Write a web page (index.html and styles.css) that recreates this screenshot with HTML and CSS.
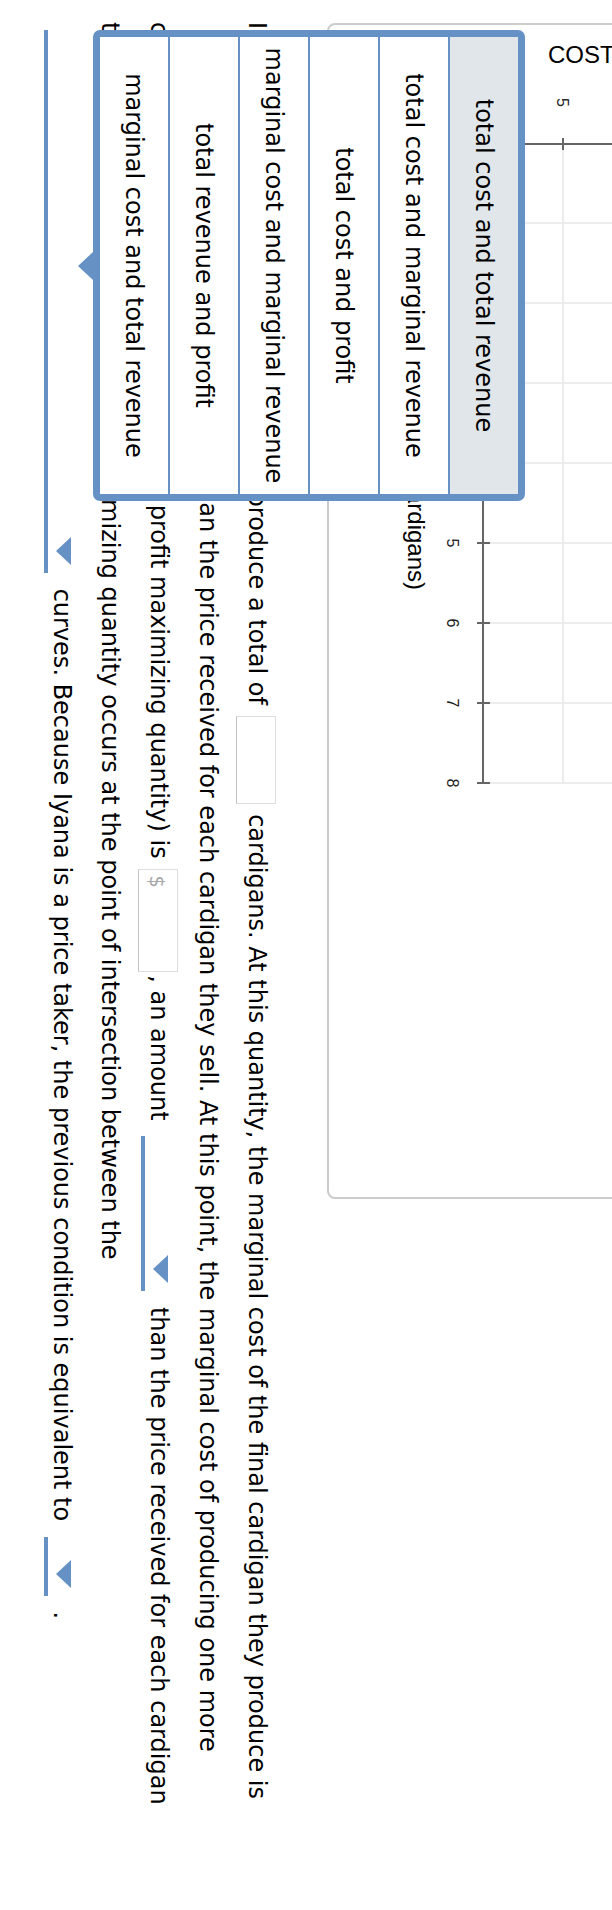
FILE: index.html
```html
<!DOCTYPE html>
<html lang="en">
<head>
<meta charset="utf-8">
<title>Profit maximization for a price taker</title>
<link rel="stylesheet" href="styles.css">
</head>
<body>
<div class="stage">
  <div class="graph-card">
    <svg class="chart" viewBox="25 -273 1172 556" width="1172" height="556" aria-label="Cost graph">
      <g class="grid">
        <line x1="223" y1="-255" x2="223" y2="129"/>
        <line x1="303" y1="-255" x2="303" y2="129"/>
        <line x1="383" y1="-255" x2="383" y2="129"/>
        <line x1="463" y1="-255" x2="463" y2="129"/>
        <line x1="543" y1="-255" x2="543" y2="129"/>
        <line x1="623" y1="-255" x2="623" y2="129"/>
        <line x1="703" y1="-255" x2="703" y2="129"/>
        <line x1="783" y1="-255" x2="783" y2="129"/>
        <line x1="144" y1="49" x2="783" y2="49"/>
        <line x1="144" y1="-31" x2="783" y2="-31"/>
        <line x1="144" y1="-111" x2="783" y2="-111"/>
        <line x1="144" y1="-191" x2="783" y2="-191"/>
      </g>
      <g class="axis">
        <line x1="144" y1="-255" x2="144" y2="130"/>
        <line x1="143" y1="129" x2="784" y2="129"/>
        <line x1="223" y1="122" x2="223" y2="135"/>
        <line x1="303" y1="122" x2="303" y2="135"/>
        <line x1="383" y1="122" x2="383" y2="135"/>
        <line x1="463" y1="122" x2="463" y2="135"/>
        <line x1="543" y1="122" x2="543" y2="135"/>
        <line x1="623" y1="122" x2="623" y2="135"/>
        <line x1="703" y1="122" x2="703" y2="135"/>
        <line x1="783" y1="122" x2="783" y2="135"/>
        <line x1="138" y1="49" x2="150" y2="49"/>
        <line x1="138" y1="-31" x2="150" y2="-31"/>
        <line x1="138" y1="-111" x2="150" y2="-111"/>
        <line x1="138" y1="-191" x2="150" y2="-191"/>
      </g>
      <g class="tick-label x-ticks">
        <text x="143" y="165">0</text>
        <text x="223" y="165">1</text>
        <text x="303" y="165">2</text>
        <text x="383" y="165">3</text>
        <text x="463" y="165">4</text>
        <text x="543" y="165">5</text>
        <text x="623" y="165">6</text>
        <text x="703" y="165">7</text>
        <text x="783" y="165">8</text>
      </g>
      <g class="tick-label y-ticks">
        <text x="107" y="135">0</text>
        <text x="107" y="55">5</text>
      </g>
      <text class="axis-title" x="590" y="204" text-anchor="end">QUANTITY (Cardigans)</text>
      <text class="axis-title" transform="translate(63 64) rotate(-90)">COST (Dollars per cardigan)</text>
    </svg>
  </div>

  <p class="question">
    In order to maximize profits, Iyana will produce a total of <span class="field field-qty"></span> cardigans. At this quantity, the marginal cost of the final cardigan they produce is<br>
    <span class="select select-l2"><span class="caret"></span></span> than the price received for each cardigan they sell. At this point, the marginal cost of producing one more<br>
    cardigan (that is, the cardigan after the profit maximizing quantity) is <span class="field field-money"><span class="prefix">$</span></span>, an amount <span class="select select-l3"><span class="caret"></span></span> than the price received for each cardigan<br>
    <span class="tight">they sell. In other words, the profit maxi</span>mizing quantity occurs at the point of intersection between the<br>
    <span class="select select-l5a"><span class="caret"></span></span> curves. Because Iyana is a price taker, the previous condition is equivalent to <span class="select select-l5b"><span class="caret"></span></span> .
  </p>

  <div class="menu" role="listbox">
    <div class="option is-active" role="option">total cost and total revenue</div>
    <div class="option" role="option">total cost and marginal revenue</div>
    <div class="option" role="option">total cost and profit</div>
    <div class="option" role="option">marginal cost and marginal revenue</div>
    <div class="option" role="option">total revenue and profit</div>
    <div class="option" role="option">marginal cost and total revenue</div>
  </div>
</div>
</body>
</html>
```

FILE: styles.css
```css
html, body {
  margin: 0;
  padding: 0;
  background: #ffffff;
}

body {
  width: 612px;
  height: 1910px;
  overflow: hidden;
}

.stage {
  position: relative;
  width: 1910px;
  height: 612px;
  box-sizing: border-box;
  padding-left: 22px;
  overflow: hidden;
  transform-origin: 0 0;
  transform: translateX(612px) rotate(90deg);
  font-family: "DejaVu Sans", Verdana, sans-serif;
  color: #000000;
  background: #ffffff;
}

/* graph panel */
.graph-card {
  width: 1176px;
  height: 560px;
  box-sizing: border-box;
  margin: -275px 0 0 1px;
  border: 2px solid #cccccc;
  border-radius: 8px;
  background: #ffffff;
}

.chart {
  display: block;
}

.grid line {
  stroke: #ececec;
  stroke-width: 2;
}

.axis line {
  stroke: #666666;
  stroke-width: 2;
}

.tick-label text {
  font-family: "Liberation Sans", Arial, sans-serif;
  font-size: 16px;
  fill: #222222;
}

.x-ticks text {
  text-anchor: middle;
}

.y-ticks text {
  text-anchor: end;
}

.axis-title {
  font-family: "Liberation Sans", Arial, sans-serif;
  font-size: 24px;
  fill: #000000;
}

/* question text */
.question {
  margin: 46.3px 0 0;
  font-size: 24px;
  line-height: 48.75px;
  white-space: nowrap;
}

.tight {
  word-spacing: -0.8px;
}

.field {
  display: inline-block;
  vertical-align: middle;
  height: 40px;
  box-sizing: border-box;
  margin: 0 3px;
  border: 1px solid #dedede;
  border-bottom-color: #c4c4c4;
  background: #ffffff;
}

.field-qty {
  width: 88px;
}

.field-money {
  width: 103px;
  padding-left: 5px;
}

.prefix {
  display: block;
  font-size: 20px;
  line-height: 40px;
  color: #a8a8a8;
}

.select {
  display: inline-block;
  box-sizing: border-box;
  margin: 0 8px;
  padding-right: 8px;
  line-height: 27px;
  text-align: right;
  border-bottom: 4px solid #6591c4;
}

.select-l2 { width: 432px; }
.select-l3 { width: 155px; }
.select-l5a { width: 543px; }
.select-l5b { width: 59px; }

.caret {
  display: inline-block;
  width: 0;
  height: 0;
  border-left: 14px solid transparent;
  border-right: 14px solid transparent;
  border-top: 15px solid #6591c4;
  vertical-align: 2px;
}

/* open dropdown menu */
.menu {
  position: absolute;
  left: 30px;
  top: 87px;
  width: 471px;
  height: 432px;
  box-sizing: border-box;
  border: 7px solid #6591c4;
  border-radius: 7px;
  background: #ffffff;
  display: flex;
  flex-direction: column;
}

.menu::after {
  content: "";
  position: absolute;
  left: 50%;
  margin-left: -14px;
  top: calc(100% + 7px);
  border-left: 14px solid transparent;
  border-right: 14px solid transparent;
  border-top: 15px solid #6591c4;
}

.option {
  flex: 1 1 0;
  display: flex;
  align-items: center;
  justify-content: center;
  font-size: 24px;
  line-height: 1.2;
  color: #000000;
  background: #ffffff;
}

.option + .option {
  border-top: 2px solid #6591c4;
}

.option.is-active {
  background: #e1e6ea;
}
```
